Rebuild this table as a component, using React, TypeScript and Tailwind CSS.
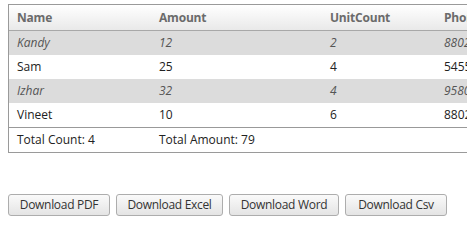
import React from "react";

type Row = { name: string; amount: number; units: number; phone: string };

const rows: Row[] = [
  { name: "Kandy", amount: 12, units: 2, phone: "8802345678" },
  { name: "Sam", amount: 25, units: 4, phone: "5455667788" },
  { name: "Izhar", amount: 32, units: 4, phone: "9580123456" },
  { name: "Vineet", amount: 10, units: 6, phone: "8802987654" },
];

const cols = "grid grid-cols-[142px_171px_114px_160px]";

const buttons = [
  { label: "Download PDF", w: "w-[102px]" },
  { label: "Download Excel", w: "w-[107px]" },
  { label: "Download Word", w: "w-[110px]" },
  { label: "Download Csv", w: "w-[102px]" },
];

export default function App() {
  return (
    <div
      className="w-[467px] h-[245px] overflow-hidden bg-white text-[12px] text-[#222]"
      style={{ fontFamily: '"Open Sans", "Noto Sans", Arial, sans-serif' }}
    >
      <div className="pl-2 pt-1">
        <div className="w-[589px] border border-[#9a9a9a]">
          <div
            className={`${cols} h-[26px] items-center border-b border-[#a8a8a8] bg-gradient-to-b from-white to-[#e9e9e9] font-bold tracking-[-0.2px] text-[#6b6b6b]`}
          >
            <div className="pl-2">Name</div>
            <div className="pl-2">Amount</div>
            <div className="pl-2">UnitCount</div>
            <div className="pl-2">Phone</div>
          </div>
          {rows.map((r, i) => {
            const alt = i % 2 === 0;
            return (
              <div
                key={r.name}
                className={`${cols} h-[24px] items-center ${
                  alt ? "bg-[#dcdcdc] italic text-[#555]" : "bg-white text-[#222]"
                }`}
              >
                <div className="pl-2">{r.name}</div>
                <div className="pl-2">{r.amount}</div>
                <div className="pl-2">{r.units}</div>
                <div className="pl-2">{r.phone}</div>
              </div>
            );
          })}
          <div className={`${cols} h-[25px] items-center border-t border-[#999] bg-white text-[#222]`}>
            <div className="pl-2">Total Count: 4</div>
            <div className="pl-2">Total Amount: 79</div>
            <div />
            <div />
          </div>
        </div>
        <div className="mt-[41px] flex gap-[6px]">
          {buttons.map((b) => (
            <button
              key={b.label}
              className={`${b.w} h-[22px] rounded-[3px] border border-[#adadad] bg-gradient-to-b from-[#fafafa] to-[#e4e4e4] text-center text-[12px] tracking-[-0.3px] text-[#333]`}
            >
              {b.label}
            </button>
          ))}
        </div>
      </div>
    </div>
  );
}
